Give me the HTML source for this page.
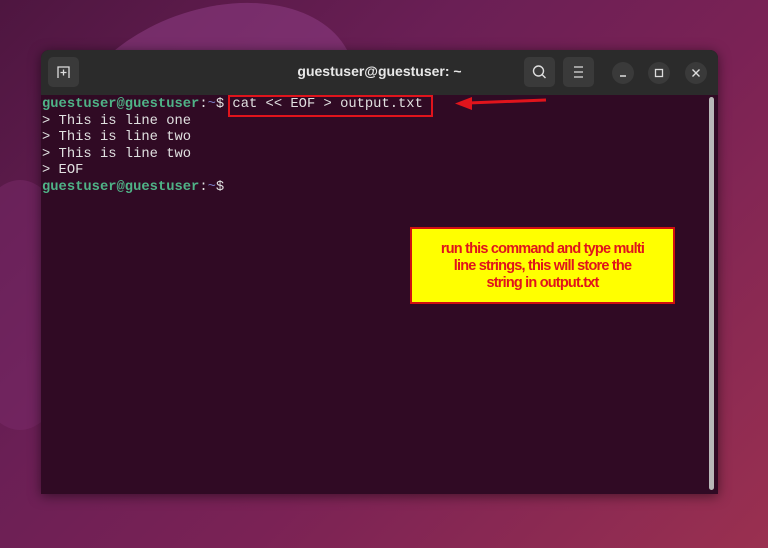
<!DOCTYPE html>
<html><head><style>
*{margin:0;padding:0;box-sizing:border-box}
body{width:768px;height:548px;overflow:hidden;position:relative;background:linear-gradient(135deg,#4e1640 0%,#6a1f55 35%,#7a2255 60%,#9a3050 100%);font-family:"Liberation Sans",sans-serif}
.blob{position:absolute;border-radius:50%;}
.win{position:absolute;left:41px;top:50px;width:677px;height:444px;background:#300a24;border-radius:8px 8px 0 0;box-shadow:0 2px 12px rgba(0,0,0,.5);overflow:hidden}
.tb{height:45px;background:#2b2b2b;position:relative;color:#e8e8e8}
.title{position:absolute;left:0;right:0;top:13px;text-align:center;font-weight:bold;font-size:14px}
.btn{position:absolute;top:7px;width:31px;height:30px;background:#3a3a3a;border-radius:5px}
.cbtn{position:absolute;top:12px;width:22px;height:22px;background:#3a3a3a;border-radius:50%}
.term{position:absolute;left:1px;top:47px;font-family:"Liberation Mono",monospace;font-size:13.8px;line-height:16.6px;color:#e0e0e0;white-space:pre}
.g{color:#4fb387;font-weight:bold}.b{color:#7a7ac0}
.sb{position:absolute;left:668px;top:47px;width:5px;height:393px;background:#b8b8b8;border-radius:3px}
</style></head><body>
<div class="blob" style="left:60px;top:10px;width:300px;height:200px;background:#8a3a80;opacity:.6;transform:rotate(-20deg)"></div>
<div class="blob" style="left:-40px;top:180px;width:120px;height:250px;background:#7a2a6a;opacity:.5"></div>
<div class="win">
 <div class="tb">
  <div class="btn" style="left:7px"><svg width="31" height="30"><path d="M10 21V10h11v11M15.5 12.5v6M12.5 15.5h6" stroke="#ddd" stroke-width="1.3" fill="none"/></svg></div>
  <div class="title">guestuser@guestuser: ~</div>
  <div class="btn" style="left:483px"><svg width="31" height="30"><circle cx="14.5" cy="14" r="5" stroke="#ddd" stroke-width="1.4" fill="none"/><path d="M18 17.5l3.5 3.5" stroke="#ddd" stroke-width="1.4"/></svg></div>
  <div class="btn" style="left:522px"><svg width="31" height="30"><path d="M11 10h9M11 15h9M11 20h9" stroke="#ddd" stroke-width="1.3"/></svg></div>
  <div class="cbtn" style="left:571px"><svg width="22" height="22"><path d="M8 14h6" stroke="#ddd" stroke-width="1.4"/></svg></div>
  <div class="cbtn" style="left:607px"><svg width="22" height="22"><rect x="7.5" y="7.5" width="7" height="7" stroke="#ddd" stroke-width="1.3" fill="none"/></svg></div>
  <div class="cbtn" style="left:644px"><svg width="22" height="22"><path d="M7.5 7.5l7 7M14.5 7.5l-7 7" stroke="#ddd" stroke-width="1.4"/></svg></div>
 </div>
 <div class="term"><span class="g">guestuser@guestuser</span>:<span class="b">~</span>$ cat &lt;&lt; EOF &gt; output.txt
&gt; This is line one
&gt; This is line two
&gt; This is line two
&gt; EOF
<span class="g">guestuser@guestuser</span>:<span class="b">~</span>$</div>
 <div class="sb"></div>
</div>
<div style="position:absolute;left:228px;top:95px;width:205px;height:22px;border:2px solid #e0141c"></div>
<svg style="position:absolute;left:450px;top:92px" width="100" height="20"><path d="M96 8L18 11" stroke="#e0141c" stroke-width="3"/><path d="M5 11.5L22 5v13z" fill="#e0141c"/></svg>
<div style="position:absolute;left:410px;top:227px;width:265px;height:77px;background:#ffff00;border:2px solid #d01010;color:#e0141c;font-weight:bold;font-size:14.5px;line-height:17px;text-align:center;padding-top:12px;letter-spacing:-0.8px">run this command and type multi<br>line strings, this will store the<br>string in output.txt</div>
</body></html>
